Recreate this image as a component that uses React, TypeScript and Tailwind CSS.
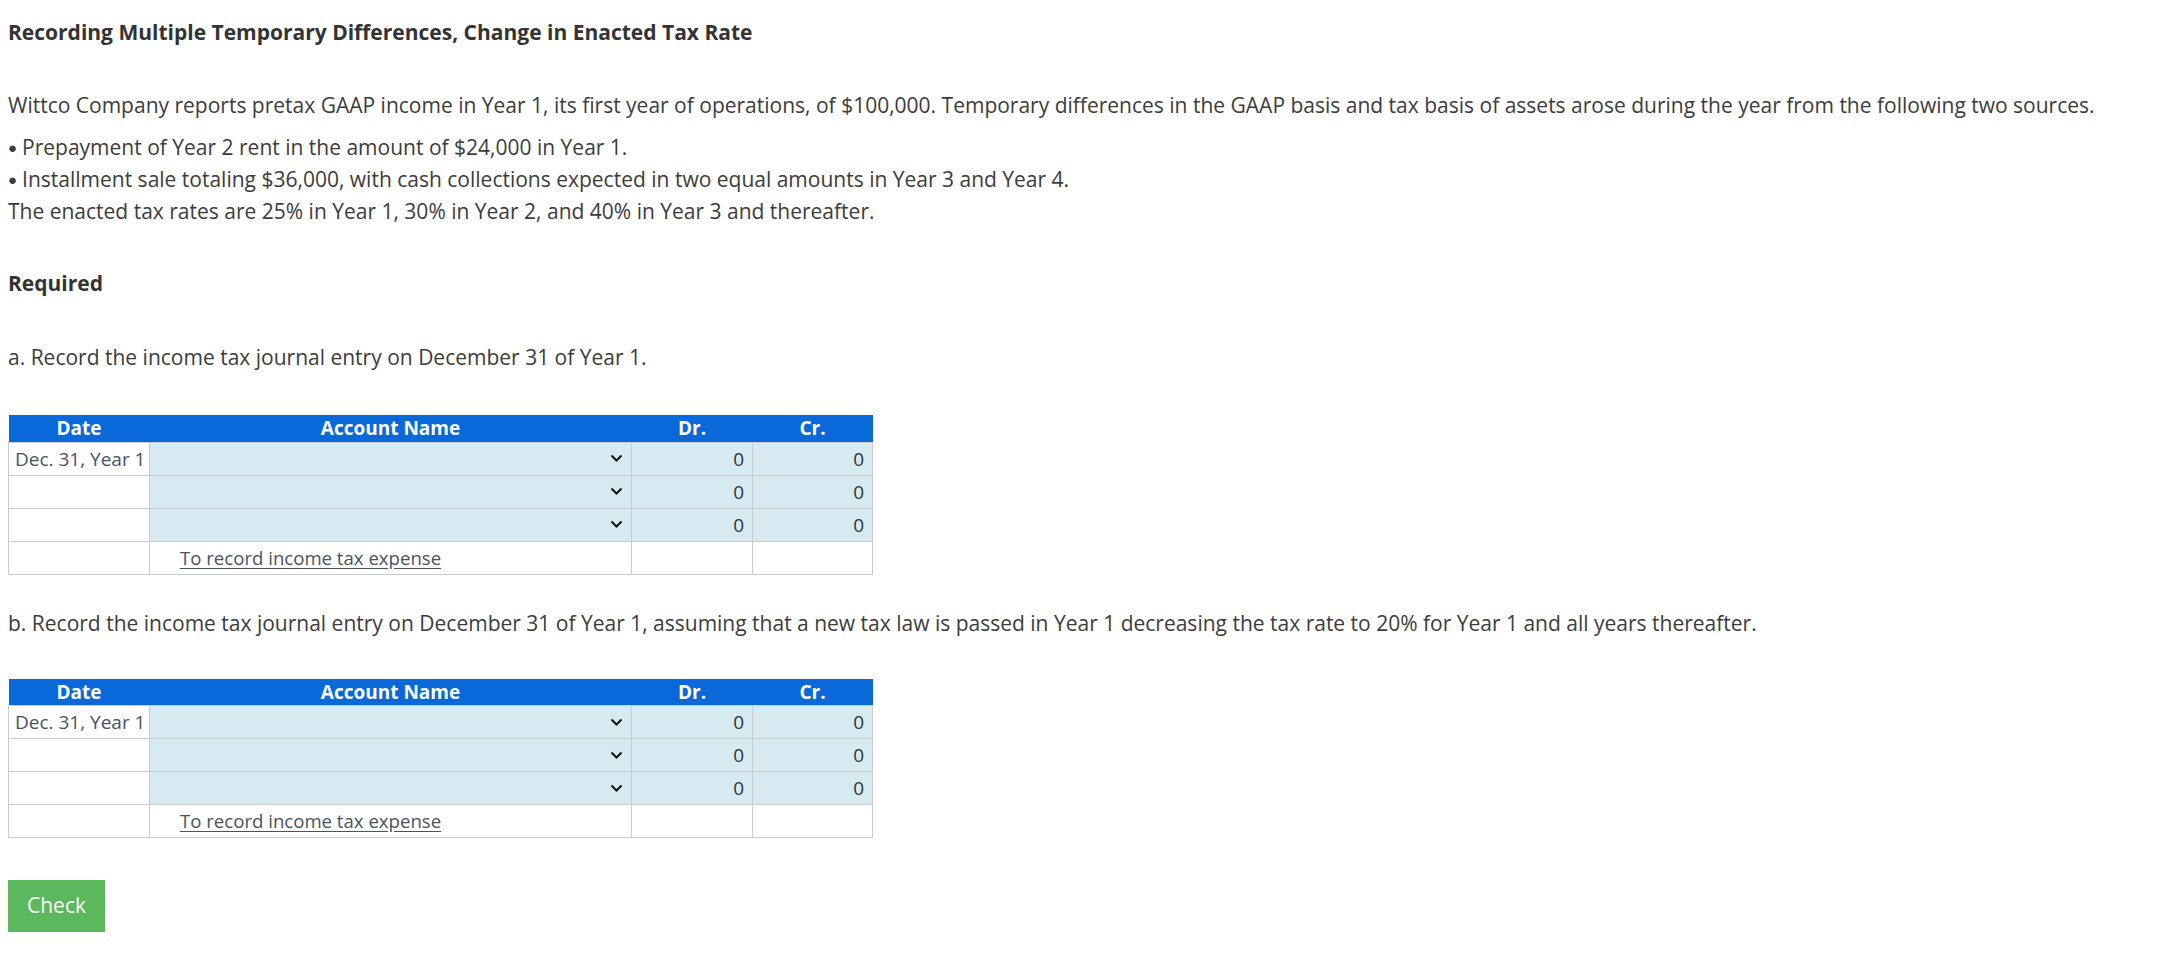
import React from "react";

const font = { fontFamily: '"Open Sans", "Noto Sans", sans-serif' };

function Chevron() {
  return (
    <svg width="13" height="9" viewBox="0 0 13 9" className="shrink-0">
      <path d="M1.5 1.5 L6.5 6.5 L11.5 1.5" fill="none" stroke="#111" strokeWidth="2" />
    </svg>
  );
}

function JournalTable() {
  const rows = [0, 1, 2];
  return (
    <table className="border-collapse w-[864px] table-fixed text-[19px]">
      <colgroup>
        <col className="w-[141px]" />
        <col className="w-[482px]" />
        <col className="w-[121px]" />
        <col className="w-[120px]" />
      </colgroup>
      <thead>
        <tr className="bg-[#0a69d9] text-white h-[27px]">
          <th className="font-bold text-[19px] leading-[26px] p-0 text-center">Date</th>
          <th className="font-bold text-[19px] leading-[26px] p-0 text-center">Account Name</th>
          <th className="font-bold text-[19px] leading-[26px] p-0 text-center">Dr.</th>
          <th className="font-bold text-[19px] leading-[26px] p-0 text-center">Cr.</th>
        </tr>
      </thead>
      <tbody>
        {rows.map((i) => (
          <tr key={i} className="h-[33px]">
            <td className="border border-[#cccccc] bg-white px-[6px] leading-[26px] text-[#4a5263] text-right whitespace-nowrap">
              {i === 0 ? "Dec. 31, Year 1" : ""}
            </td>
            <td className="border border-[#cccccc] bg-[#d5ebf1] p-0">
              <div className="flex items-center justify-end pr-[8px] h-[31px]">
                <Chevron />
              </div>
            </td>
            <td className="border border-[#cccccc] bg-[#d5ebf1] leading-[26px] text-right pr-[8px] text-[#333]">0</td>
            <td className="border border-[#cccccc] bg-[#d5ebf1] leading-[26px] text-right pr-[8px] text-[#333]">0</td>
          </tr>
        ))}
        <tr className="h-[33px]">
          <td className="border border-[#cccccc] bg-white"></td>
          <td className="border border-[#cccccc] bg-white pl-[30px] leading-[26px]">
            <span className="underline text-[18.6px] text-[#4a5263] underline-offset-[3px]">To record income tax expense</span>
          </td>
          <td className="border border-[#cccccc] bg-white"></td>
          <td className="border border-[#cccccc] bg-white"></td>
        </tr>
      </tbody>
    </table>
  );
}

function Bullet() {
  return <span className="text-[15px] align-[2px] mr-[5px]">●</span>;
}

export default function App() {
  return (
    <div style={font} className="bg-white min-h-[970px] pl-[8px] pt-[16px] text-[#333333] text-[21px]">
      <div className="font-bold text-[#333] leading-[32px] text-[21px]">
        Recording Multiple Temporary Differences, Change in Enacted Tax Rate
      </div>
      <div className="mt-[41px] leading-[32px] text-[#3c3c3c]">
        <p className="mb-[10px]">
          Wittco Company reports pretax GAAP income in Year 1, its first year of operations, of $100,000. Temporary
          differences in the GAAP basis and tax basis of assets arose during the year from the following two sources.
        </p>
        <p>
          <Bullet />Prepayment of Year 2 rent in the amount of $24,000 in Year 1.
        </p>
        <p>
          <Bullet />Installment sale totaling $36,000, with cash collections expected in two equal amounts in Year 3 and Year 4.
        </p>
        <p>The enacted tax rates are 25% in Year 1, 30% in Year 2, and 40% in Year 3 and thereafter.</p>
      </div>
      <div className="mt-[40px] font-bold leading-[32px] text-[#333]">Required</div>
      <div className="mt-[42px] leading-[32px] text-[#3c3c3c]">a. Record the income tax journal entry on December 31 of Year 1.</div>
      <div className="mt-[42px]">
        <JournalTable />
      </div>
      <div className="mt-[32px] leading-[32px] text-[#3c3c3c]">
        b. Record the income tax journal entry on December 31 of Year 1, assuming that a new tax law is passed in Year 1
        decreasing the tax rate to 20% for Year 1 and all years thereafter.
      </div>
      <div className="mt-[40px]">
        <JournalTable />
      </div>
      <button className="mt-[42px] bg-[#5cb85c] text-white text-[21px] w-[97px] h-[52px] flex items-center justify-center">
        Check
      </button>
    </div>
  );
}
